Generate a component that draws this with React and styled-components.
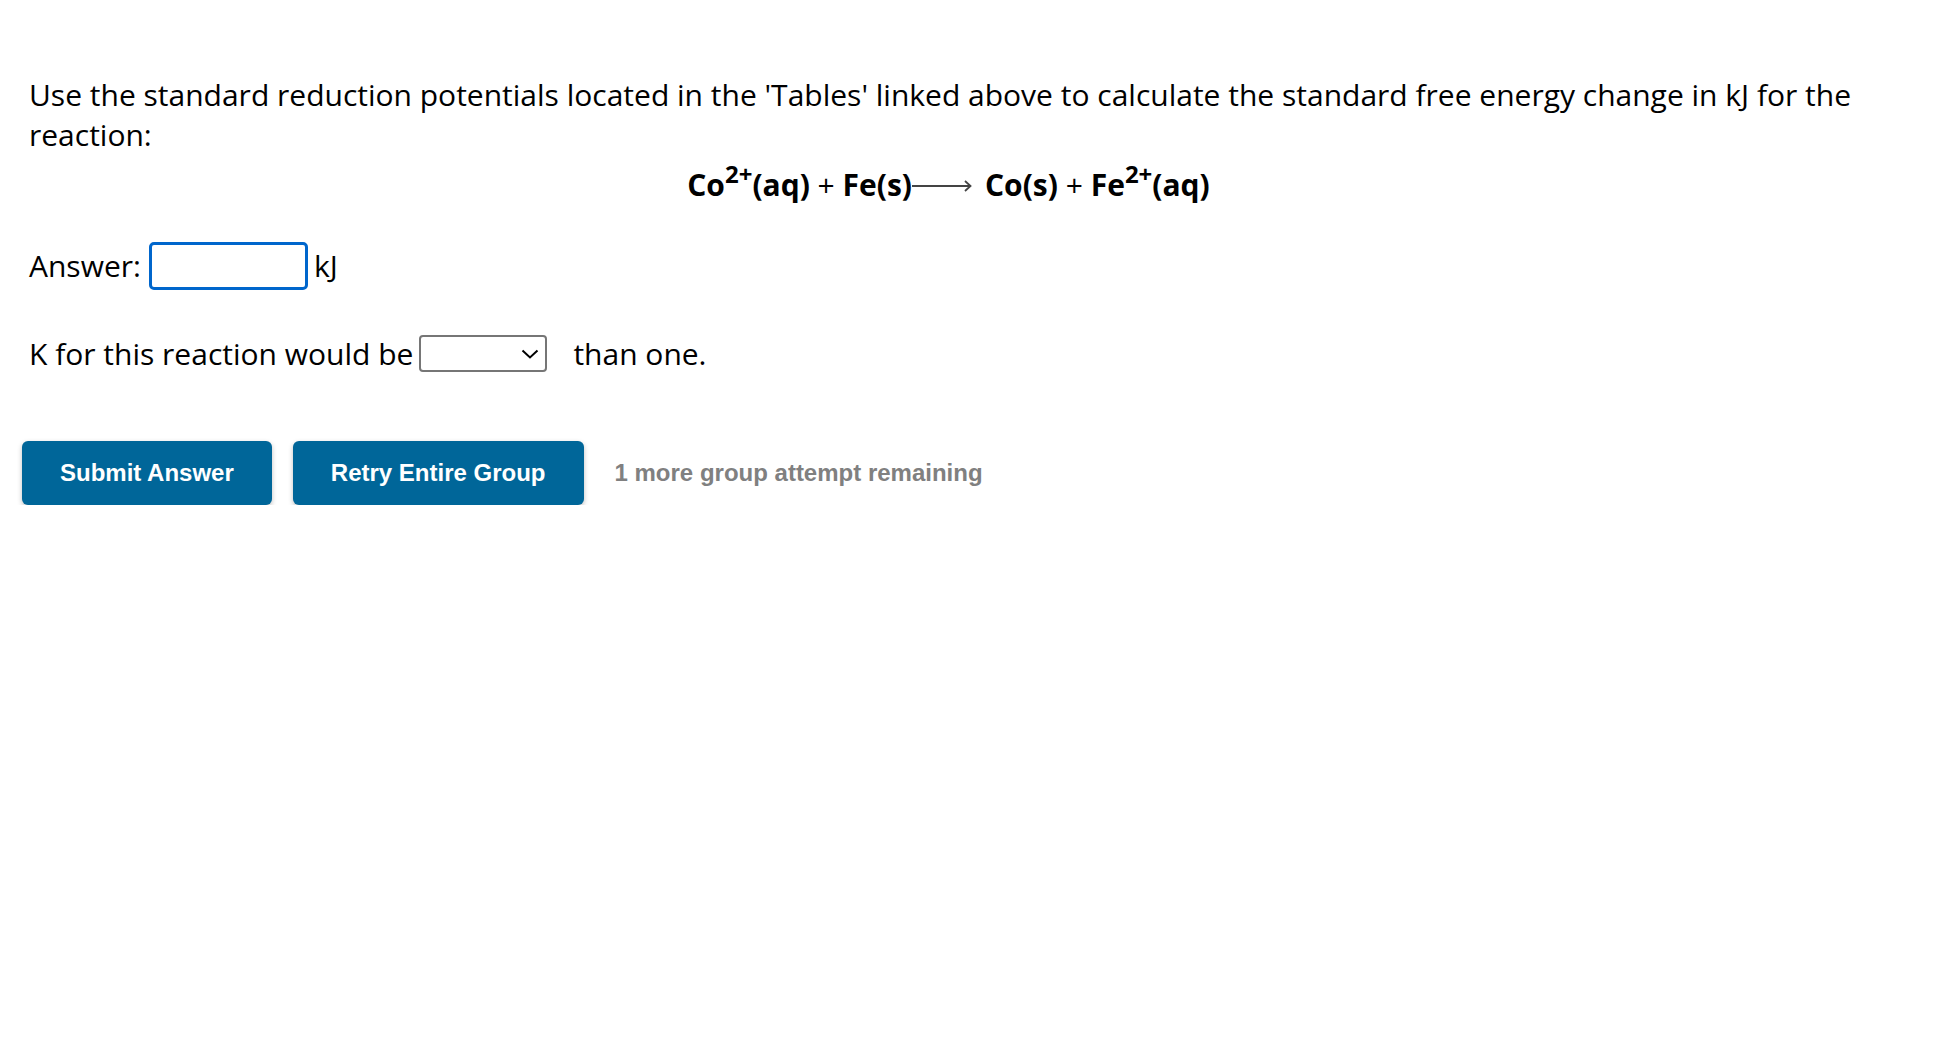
import styled, { createGlobalStyle } from "styled-components";

const GlobalStyle = createGlobalStyle`
  html, body {
    margin: 0;
    padding: 0;
    background: #ffffff;
  }
  body {
    font-family: "Open Sans", "Liberation Sans", sans-serif;
    color: #000000;
  }
`;

const Page = styled.div`
  padding: 75px 30px 0 29px;
  font-size: 30px;
  line-height: 40px;
`;

const Prompt = styled.p`
  margin: 0;
`;

const Equation = styled.div`
  margin-top: 10px;
  padding-right: 42px;
  text-align: center;
  font-weight: 700;
  white-space: nowrap;
  sup {
    font-size: 0.8em;
    line-height: 0;
    vertical-align: 0.55em;
  }
`;

const Plus = styled.span`
  font-weight: 400;
`;

const ArrowWrap = styled.span`
  display: inline-block;
  margin-right: 13px;
  vertical-align: 3px;
  line-height: 0;
`;

const Row = styled.div`
  display: flex;
  align-items: center;
  gap: ${(p) => p.gap || 6}px;
  margin-top: ${(p) => p.top}px;
  height: ${(p) => p.h}px;
`;

const AnswerInput = styled.input`
  box-sizing: border-box;
  width: 159px;
  height: 48px;
  border: 3px solid #0066cc;
  border-radius: 5px;
  outline: none;
  font: inherit;
  padding: 0 8px;
  margin-left: 2px;
`;

const SelectBox = styled.div`
  box-sizing: border-box;
  width: 128px;
  height: 37px;
  border: 2px solid #767676;
  border-radius: 4px;
  display: flex;
  align-items: center;
  justify-content: flex-end;
  padding-right: 6px;
  margin-right: 20px;
`;

const ButtonBar = styled.div`
  display: flex;
  align-items: center;
  gap: 21px;
  margin-top: 69px;
  margin-left: -7px;
`;

const Button = styled.button`
  height: 64px;
  padding: 0 38px;
  border: none;
  border-radius: 6px;
  background: #006699;
  color: #ffffff;
  font-family: "Liberation Sans", Arial, sans-serif;
  font-weight: 700;
  font-size: 24px;
  box-shadow: 0 2px 5px rgba(0, 0, 0, 0.25);
  cursor: pointer;
`;

const Remaining = styled.span`
  margin-left: 10px;
  font-family: "Liberation Sans", Arial, sans-serif;
  font-weight: 700;
  font-size: 24px;
  color: #808080;
`;

const Chevron = () => (
  <svg width="18" height="12" viewBox="0 0 18 12" fill="none">
    <path d="M1.5 2.5 L9 9.5 L16.5 2.5" stroke="#000" strokeWidth="2" />
  </svg>
);

const ReactionArrow = () => (
  <ArrowWrap>
    <svg width="60" height="14" viewBox="0 0 60 14" fill="none">
      <path d="M0 7 H58" stroke="#444" strokeWidth="2" />
      <path d="M53 2 L58.5 7 L53 12" stroke="#444" strokeWidth="1.8" />
    </svg>
  </ArrowWrap>
);

export default function App() {
  return (
    <>
      <GlobalStyle />
      <Page>
        <Prompt>
          Use the standard reduction potentials located in the 'Tables' linked
          above to calculate the standard free energy change in kJ for the
          reaction:
        </Prompt>
        <Equation>
          Co<sup>2+</sup>(aq) <Plus>+</Plus> Fe(s)
          <ReactionArrow />
          Co(s) <Plus>+</Plus> Fe<sup>2+</sup>(aq)
        </Equation>
        <Row top={37} h={48}>
          <span>Answer:</span>
          <AnswerInput type="text" />
          <span>kJ</span>
        </Row>
        <Row top={45} h={37}>
          <span>K for this reaction would be</span>
          <SelectBox>
            <Chevron />
          </SelectBox>
          <span>than one.</span>
        </Row>
        <ButtonBar>
          <Button>Submit Answer</Button>
          <Button>Retry Entire Group</Button>
          <Remaining>1 more group attempt remaining</Remaining>
        </ButtonBar>
      </Page>
    </>
  );
}
